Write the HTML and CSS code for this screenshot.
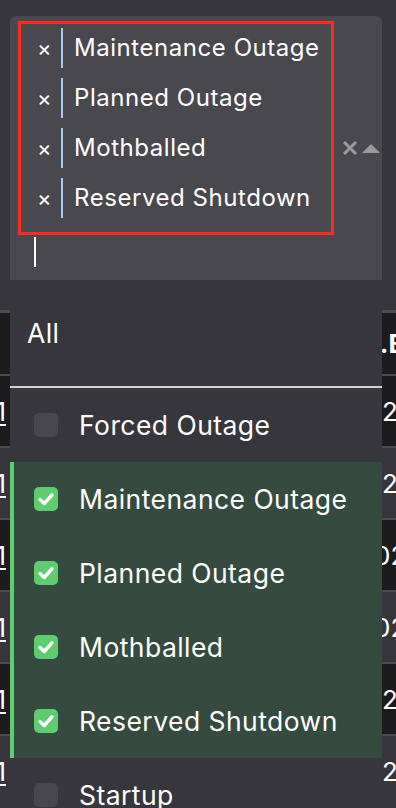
FILE: index.html
```html
<!DOCTYPE html>
<html>
<head>
<meta charset="utf-8">
<link rel="stylesheet" href="styles.css">
</head>
<body>
<div class="select">
  <div class="values">
    <div class="chips">
      <div class="chip"><span class="chip-x">×</span><span class="chip-label">Maintenance Outage</span></div>
      <div class="chip"><span class="chip-x">×</span><span class="chip-label">Planned Outage</span></div>
      <div class="chip"><span class="chip-x">×</span><span class="chip-label">Mothballed</span></div>
      <div class="chip"><span class="chip-x">×</span><span class="chip-label">Reserved Shutdown</span></div>
    </div>
    <div class="cursor"></div>
  </div>
  <div class="indicators">
    <svg class="clear" width="16" height="16" viewBox="0 0 16 16"><path d="M2 2L14 14M14 2L2 14" stroke="#9a9a9d" stroke-width="3"/></svg>
    <svg class="arrow" width="18" height="9" viewBox="0 0 18 9"><path d="M0 9L9 0L18 9Z" fill="#9a9a9d"/></svg>
  </div>
</div>

<div class="table-wrap">
  <div class="table">
    <div class="row head"><span class="lc"></span><span class="rc b">L.B</span></div>
    <div class="row dark"><span class="lc">1</span><span class="rc">2</span></div>
    <div class="row grey"><span class="lc">1</span><span class="rc">2</span></div>
    <div class="row dark"><span class="lc">1</span><span class="rc o">02</span></div>
    <div class="row grey"><span class="lc">1</span><span class="rc o">02</span></div>
    <div class="row dark"><span class="lc">1</span><span class="rc">2</span></div>
    <div class="row grey"><span class="lc">1</span><span class="rc">2</span></div>
  </div>

  <div class="menu">
    <div class="opt all">All</div>
    <div class="sep"></div>
    <div class="opt"><span class="box"></span>Forced Outage</div>
    <div class="selected">
      <div class="opt"><span class="box on"><svg width="24" height="24" viewBox="0 0 24 24"><path d="M6 12.5L10.2 16.5L18 7.8" fill="none" stroke="#fff" stroke-width="3.4" stroke-linecap="round" stroke-linejoin="round"/></svg></span>Maintenance Outage</div>
      <div class="opt"><span class="box on"><svg width="24" height="24" viewBox="0 0 24 24"><path d="M6 12.5L10.2 16.5L18 7.8" fill="none" stroke="#fff" stroke-width="3.4" stroke-linecap="round" stroke-linejoin="round"/></svg></span>Planned Outage</div>
      <div class="opt"><span class="box on"><svg width="24" height="24" viewBox="0 0 24 24"><path d="M6 12.5L10.2 16.5L18 7.8" fill="none" stroke="#fff" stroke-width="3.4" stroke-linecap="round" stroke-linejoin="round"/></svg></span>Mothballed</div>
      <div class="opt"><span class="box on"><svg width="24" height="24" viewBox="0 0 24 24"><path d="M6 12.5L10.2 16.5L18 7.8" fill="none" stroke="#fff" stroke-width="3.4" stroke-linecap="round" stroke-linejoin="round"/></svg></span>Reserved Shutdown</div>
    </div>
    <div class="opt"><span class="box"></span>Startup</div>
  </div>
</div>
</body>
</html>
```
FILE: styles.css
```css
* { box-sizing: border-box; }
html, body { margin: 0; padding: 0; }
body {
  background: #37363c;
  font-family: Inter, "Noto Sans", sans-serif;
  color: #fff;
  width: 396px;
  height: 808px;
  overflow: hidden;
}
.select {
  margin: 16px 14px 0 10px;
  height: 264px;
  background: #49484e;
  border-radius: 6px 6px 0 0;
  display: flex;
  align-items: center;
}
.values {
  align-self: flex-start;
  padding: 5px 0 0 8px;
  display: flex;
  flex-direction: column;
}
.chips {
  width: 316px;
  height: 214px;
  border: 3px solid #ff2a1f;
  padding: 4px 0 0 0;
  display: flex;
  flex-direction: column;
  gap: 10px;
}
.chip {
  height: 40px;
  display: flex;
  align-items: center;
}
.chip-x {
  width: 42px;
  padding-left: 16px;
  font-size: 22px;
  line-height: 40px;
  color: #fff;
  height: 40px;
  border-right: 2px solid #a9cbf2;
}
.chip-label {
  padding-left: 11px;
  font-size: 24px;
  letter-spacing: 0.55px;
  line-height: 40px;
  white-space: nowrap;
}
.cursor {
  width: 2px;
  height: 30px;
  background: #fff;
  margin: 2px 0 0 16px;
}
.indicators {
  display: flex;
  align-items: center;
  margin-left: 8px;
  gap: 4px;
}
.clear { display: block; }
.arrow { display: block; }

.table-wrap {
  position: relative;
  margin-top: 30px;
}
.row {
  display: flex;
  justify-content: space-between;
  align-items: center;
  height: 72px;
  border-top: 2px solid #4a4a4f;
  font-size: 26px;
}
.row.head { height: 64px; border-top-width: 3px; background: #1c1c1e; }
.row.dark { background: #1c1c1e; }
.row.grey { background: #37363c; }
.lc {
  width: 6px;
  overflow: hidden;
  display: flex;
  justify-content: flex-end;
  text-decoration: underline;
  text-underline-offset: 3px;
}
.rc {
  width: 14px;
  overflow: visible;
  white-space: nowrap;
}
.rc.o { width: 22px; }
.rc.b { width: 31px; font-weight: 700; }

.menu {
  position: absolute;
  top: 0;
  left: 10px;
  width: 372px;
  background: #37363c;
}
.opt {
  height: 74px;
  display: flex;
  align-items: center;
  padding-left: 24px;
  font-size: 26.5px;
  letter-spacing: 0.45px;
  white-space: nowrap;
}
.opt.all {
  height: 76px;
  align-items: flex-start;
  padding: 7px 0 0 17px;
}
.sep { height: 2px; background: #d2d2d2; }
.box {
  width: 24px;
  height: 24px;
  border-radius: 5px;
  background: #48474d;
  margin-right: 21px;
  flex: none;
}
.box.on { background: #5fcd6f; }
.box svg { display: block; }
.selected {
  background: #354b3f;
  border-left: 4px solid #5ecf6e;
}
.selected .opt { padding-left: 20px; }
```
